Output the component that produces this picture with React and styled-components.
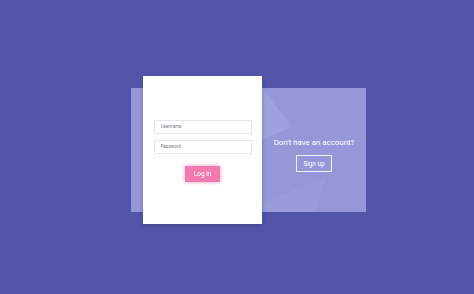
import React from "react";
import styled, { createGlobalStyle } from "styled-components";

const Global = createGlobalStyle`
  html, body { margin: 0; padding: 0; }
  body {
    background: #5356a8;
    font-family: Roboto, "Liberation Sans", Arial, sans-serif;
  }
`;

const Page = styled.div`
  width: 474px;
  height: 294px;
  box-sizing: border-box;
  padding: 6px 0 0 131px;
  display: flex;
  align-items: center;
  background: #5356a8;
  overflow: hidden;
`;

const Panel = styled.div`
  position: relative;
  width: 235px;
  height: 124px;
  background: #9597d9;
  display: flex;
  align-items: center;
`;

const Deco = styled.svg`
  position: absolute;
  left: 0;
  top: 0;
  width: 235px;
  height: 124px;
`;

const Card = styled.div`
  position: relative;
  z-index: 1;
  margin: -12px 0 -12px 12px;
  width: 119px;
  height: 148px;
  background: #ffffff;
  box-shadow: 0 1px 4px rgba(40, 40, 100, 0.35);
  display: flex;
  flex-direction: column;
  align-items: center;
  justify-content: center;
  padding-top: 1px;
  box-sizing: border-box;
`;

const Input = styled.input`
  box-sizing: border-box;
  width: 98px;
  height: 14px;
  margin: 0 0 ${(p) => p.$gap}px 0;
  border: 1px solid #e6e6ea;
  padding: 0 6px;
  font-family: Roboto, "Liberation Sans", Arial, sans-serif;
  font-size: 4.6px;
  color: #555;
  outline: none;
  &::placeholder { color: #7a7a80; }
`;

const LoginButton = styled.button`
  width: 35px;
  height: 16px;
  margin-top: 6px;
  border: none;
  background: #f27aae;
  color: #fff;
  font-family: Roboto, "Liberation Sans", Arial, sans-serif;
  font-size: 6.5px;
  padding: 0;
  box-shadow: 0 0 4px rgba(242, 110, 170, 0.7);
`;

const Side = styled.div`
  position: relative;
  z-index: 1;
  flex: 1;
  height: 100%;
  display: flex;
  flex-direction: column;
  align-items: center;
  justify-content: center;
  padding-top: 10px;
  box-sizing: border-box;
`;

const Prompt = styled.div`
  color: #fff;
  font-size: 7.9px;
  line-height: 10px;
  white-space: nowrap;
`;

const SignupButton = styled.button`
  margin-top: 7px;
  width: 36px;
  height: 17px;
  border: 1px solid rgba(255, 255, 255, 0.85);
  background: transparent;
  color: #fff;
  font-family: Roboto, "Liberation Sans", Arial, sans-serif;
  font-size: 6.3px;
  padding: 0;
`;

export default function App() {
  return (
    <>
      <Global />
      <Page>
        <Panel>
          <Deco viewBox="0 0 235 124">
            <polygon points="131,0 161,39 131,52" fill="#9fa1df" />
            <polygon points="131,124 131,115 195,89 185,124" fill="#999bdb" />
          </Deco>
          <Card>
            <Input placeholder="Username" $gap={6} />
            <Input placeholder="Password" $gap={6} type="password" />
            <LoginButton>Log in</LoginButton>
          </Card>
          <Side>
            <Prompt>Don't have an account?</Prompt>
            <SignupButton>Sign up</SignupButton>
          </Side>
        </Panel>
      </Page>
    </>
  );
}
